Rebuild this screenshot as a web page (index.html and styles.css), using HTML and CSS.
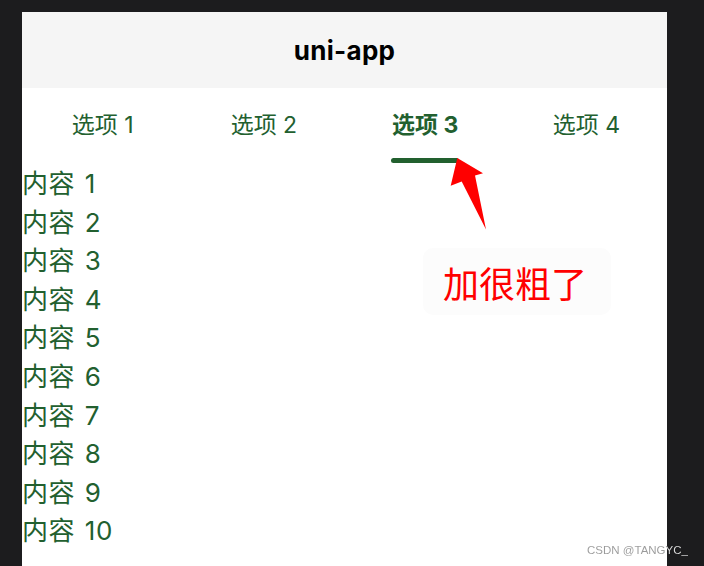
FILE: index.html
```html
<!DOCTYPE html>
<html lang="zh-CN">
<head>
<meta charset="utf-8">
<title>uni-app</title>
<link rel="stylesheet" href="styles.css">
</head>
<body>
<div class="phone">
  <header class="nav-bar"><span class="nav-title">uni-app</span></header>
  <div class="tabs">
    <div class="tab"><span class="tab-text">选项 1</span></div>
    <div class="tab"><span class="tab-text">选项 2</span></div>
    <div class="tab tab-active"><span class="tab-text">选项 3</span><span class="tab-line"></span></div>
    <div class="tab"><span class="tab-text">选项 4</span></div>
  </div>
  <ul class="content">
    <li>内容 1</li>
    <li>内容 2</li>
    <li>内容 3</li>
    <li>内容 4</li>
    <li>内容 5</li>
    <li>内容 6</li>
    <li>内容 7</li>
    <li>内容 8</li>
    <li>内容 9</li>
    <li>内容 10</li>
  </ul>
  <div class="note">加很粗了</div>
</div>
<svg class="arrow" width="60" height="90" viewBox="440 150 60 90" xmlns="http://www.w3.org/2000/svg">
  <polygon points="457.3,158 483,173.3 475,175.5 486,229.5 461.7,181.5 450.7,185.7" fill="#ff0000"/>
</svg>
<div class="watermark">CSDN @TANGYC_</div>
</body>
</html>
```

FILE: styles.css
```css
html, body {
  margin: 0;
  padding: 0;
}
body {
  background: #1c1c1e;
  width: 704px;
  height: 566px;
  overflow: hidden;
  position: relative;
  font-family: Inter, "Noto Sans CJK SC", sans-serif;
}
.phone {
  position: relative;
  margin: 12px 0 0 22px;
  width: 645px;
  height: 554px;
  background: #ffffff;
  overflow: hidden;
}
.nav-bar {
  height: 76px;
  background: #f5f5f5;
  display: flex;
  align-items: center;
  justify-content: center;
}
.nav-title {
  font-size: 26px;
  font-weight: 700;
  color: #000;
  letter-spacing: 0.3px;
}
.tabs {
  display: flex;
  height: 77px;
}
.tab {
  flex: 1;
  display: flex;
  flex-direction: column;
  align-items: center;
  padding-top: 20px;
  box-sizing: border-box;
}
.tab-text {
  font-size: 23px;
  line-height: 34px;
  color: #22602f;
  white-space: nowrap;
}
.tab-active .tab-text {
  font-weight: 700;
}
.tab-line {
  display: block;
  width: 68px;
  height: 5px;
  margin-top: 16px;
  border-radius: 3px;
  background: #22602f;
}
.content {
  list-style: none;
  margin: 0;
  padding: 0;
}
.content li {
  font-size: 26px;
  line-height: 38.6px;
  color: #22602f;
  white-space: nowrap;
  word-spacing: 2px;
  letter-spacing: 0.5px;
}
.note {
  position: absolute;
  left: 401px;
  top: 236px;
  width: 188px;
  height: 67px;
  border-radius: 10px;
  background: #fcfcfc;
  display: flex;
  align-items: center;
  justify-content: center;
  box-sizing: border-box;
  padding-right: 4px;
  font-size: 36px;
  color: #ff0000;
  font-family: "Noto Sans CJK SC", sans-serif;
}
.arrow {
  position: absolute;
  left: 440px;
  top: 150px;
}
.watermark {
  position: absolute;
  left: 587px;
  top: 542px;
  font-family: "Liberation Sans", Arial, sans-serif;
  font-size: 11.5px;
  line-height: 16px;
  white-space: nowrap;
  color: transparent;
  background: linear-gradient(90deg, #9a9a9a 80px, #e0e0e0 80px);
  -webkit-background-clip: text;
  background-clip: text;
}
```
